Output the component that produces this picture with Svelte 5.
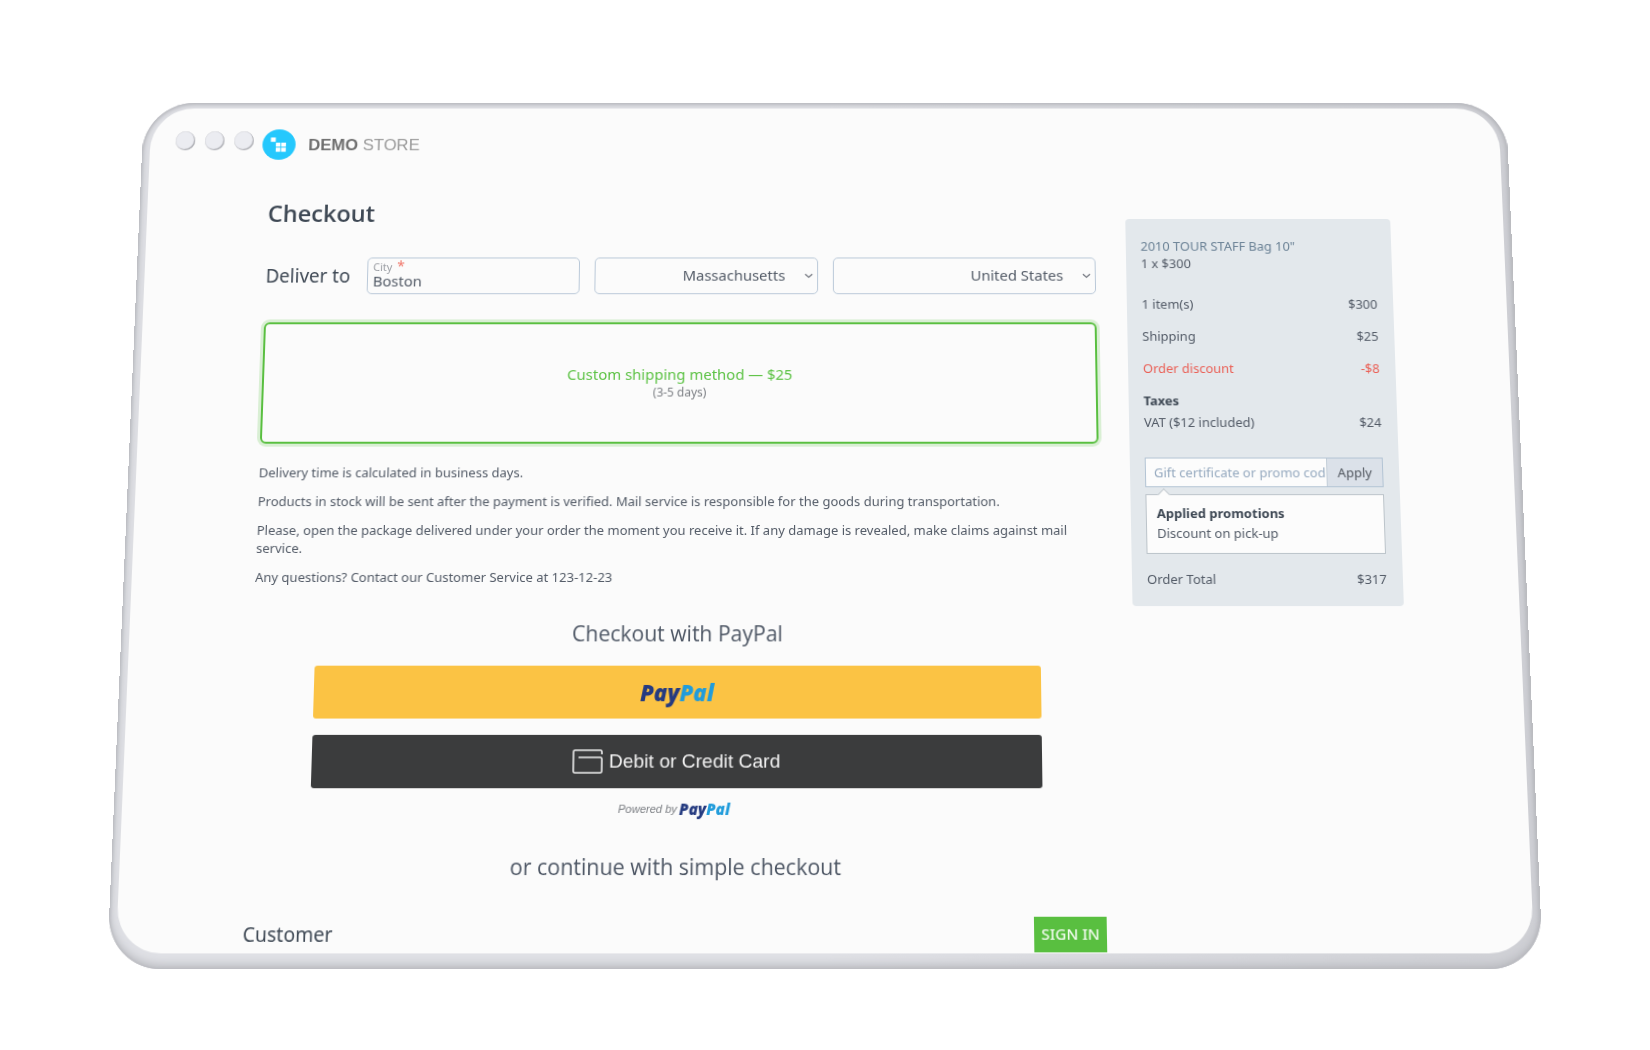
<script>
  let city = $state('Boston');
  let region = $state('Massachusetts');
  let country = $state('United States');
  let promo = $state('');

  const totals = [
    { label: '1 item(s)', value: '$300' },
    { label: 'Shipping', value: '$25' },
    { label: 'Order discount', value: '-$8', discount: true }
  ];

  const notes = [
    'Delivery time is calculated in business days.',
    'Products in stock will be sent after the payment is verified. Mail service is responsible for the goods during transportation.',
    'Please, open the package delivered under your order the moment you receive it. If any damage is revealed, make claims against mail service.',
    'Any questions? Contact our Customer Service at 123-12-23'
  ];
</script>

{#snippet chevron()}
  <svg class="chevron" viewBox="0 0 10 6" aria-hidden="true"><path d="M1 1l4 3.6L9 1" /></svg>
{/snippet}

{#snippet paypal()}
  <span class="paypal"><span class="pay">Pay</span><span class="pal">Pal</span></span>
{/snippet}

<div class="stage">
  <div class="frame">
    <div class="screen">
      <header>
        <div class="dots"><i></i><i></i><i></i></div>
        <a class="brand" href="#home">
          <svg class="mark" viewBox="0 0 34 32" aria-hidden="true">
            <ellipse cx="17" cy="16" rx="17" ry="16" fill="#25c8fd" />
            <g fill="#fff">
              <rect x="8.5" y="8.5" width="5" height="4.6" />
              <rect x="13.8" y="14" width="4.6" height="4.2" />
              <rect x="19.3" y="14" width="4.8" height="4.2" />
              <rect x="13.8" y="19.2" width="4.6" height="4.4" />
              <rect x="19.3" y="19.2" width="4.8" height="4.4" />
            </g>
          </svg>
          <span class="name"><b>DEMO</b> STORE</span>
        </a>
      </header>

      <div class="columns">
        <main>
          <h1>Checkout</h1>

          <div class="deliver">
            <h2>Deliver to</h2>
            <div class="field city">
              <label for="city">City <em>*</em></label>
              <input id="city" bind:value={city} />
            </div>
            <div class="field region">
              <select aria-label="State" bind:value={region}>
                <option>Massachusetts</option>
              </select>
              {@render chevron()}
            </div>
            <div class="field country">
              <select aria-label="Country" bind:value={country}>
                <option>United States</option>
              </select>
              {@render chevron()}
            </div>
          </div>

          <button class="method">
            <span class="title">Custom shipping method — $25</span>
            <span class="days">(3-5 days)</span>
          </button>

          <div class="notes">
            {#each notes as note}
              <p>{note}</p>
            {/each}
          </div>

          <section class="pay-options">
            <h3>Checkout with PayPal</h3>
            <button class="wide yellow">{@render paypal()}</button>
            <button class="wide dark">
              <svg class="card" viewBox="0 0 30 24" aria-hidden="true">
                <path d="M29 5V2.500a1.500 1.500 0 0 0-1.500-1.500H2.500a1.500 1.500 0 0 0-1.500 1.500v19a1.500 1.500 0 0 0 1.500 1.500h25a1.500 1.500 0 0 0 1.500-1.500V9.500a1.500 1.500 0 0 0-1.500-1.500H6" />
              </svg>
              Debit or Credit Card
            </button>
            <p class="powered"><span>Powered by</span>{@render paypal()}</p>
            <h3>or continue with simple checkout</h3>
          </section>

          <div class="customer">
            <h2>Customer</h2>
            <button class="signin">SIGN IN</button>
          </div>
        </main>

        <aside>
          <a class="product" href="#product">2010 TOUR STAFF Bag 10"</a>
          <div class="qty">1 x $300</div>
          <dl class="totals">
            {#each totals as row}
              <div class="row" class:discount={row.discount}>
                <dt>{row.label}</dt>
                <dd>{row.value}</dd>
              </div>
            {/each}
          </dl>
          <div class="taxes">Taxes</div>
          <div class="row"><span>VAT ($12 included)</span><span>$24</span></div>
          <form class="promo" onsubmit={(e) => e.preventDefault()}>
            <input aria-label="Gift certificate or promo code" placeholder="Gift certificate or promo code" bind:value={promo} />
            <button>Apply</button>
          </form>
          <div class="applied">
            <b>Applied promotions</b>
            <span>Discount on pick-up</span>
          </div>
          <div class="row total"><span>Order Total</span><span>$317</span></div>
        </aside>
      </div>
    </div>
  </div>
</div>

<style>
  :global(body) {
    margin: 0;
    background: #fff;
  }

  .stage {
    padding: 90px 126px;
    overflow: hidden;
    font-family: 'Noto Sans', 'Open Sans', sans-serif;
    font-size: 13px;
    line-height: 18px;
    color: #535b67;
  }

  .stage * {
    box-sizing: border-box;
  }

  .frame {
    padding: 6px 8px 15px;
    border-radius: 52px;
    background: linear-gradient(90deg, #dfe0e5, #dfe0e5 50%, #cfd0d5);
    box-shadow:
      inset 0 2px 4px #b9babf,
      inset 0 -4px 8px #b9babf,
      inset 1px 0 2px #c6c7cc,
      inset -2px 0 3px #bcbdc2;
    transform: perspective(1424px) rotateX(5deg);
  }

  .screen {
    border-radius: 44px;
    background: #fbfbfb;
    overflow: hidden;
    padding-bottom: 1px;
  }

  header {
    display: flex;
    align-items: center;
    gap: 9px;
    height: 76px;
    padding-left: 26px;
  }

  .dots {
    display: flex;
    gap: 10px;
    padding-bottom: 8px;
  }

  .dots i {
    width: 20px;
    height: 20px;
    border-radius: 50%;
    background: #ebecf1;
    box-shadow:
      inset -1px -1px 1px #a9aaaf,
      inset 0 0 1px #b5b6bb;
  }

  .brand {
    display: flex;
    align-items: center;
    gap: 13px;
    text-decoration: none;
    color: #9a9a9a;
    font-family: 'Liberation Sans', Arial, sans-serif;
    font-size: 17px;
  }

  .brand b {
    color: #6f6f6f;
  }

  .name {
    padding-top: 2px;
  }

  .mark {
    width: 34px;
    height: 32px;
  }

  .columns {
    display: grid;
    grid-template-columns: minmax(0, 1fr) 270px;
    align-items: start;
    gap: 31px;
    padding: 0 115px 0 123px;
  }

  h1,
  h2,
  h3,
  p,
  dl,
  dd {
    margin: 0;
  }

  button,
  input,
  select {
    font: inherit;
    color: inherit;
    margin: 0;
  }

  h1 {
    padding-top: 18px;
    font: 600 24px/32px 'Open Sans', sans-serif;
    color: #3e4854;
  }

  h2 {
    font: 400 19px/34px 'Noto Sans', sans-serif;
    color: #3e4854;
  }

  .deliver {
    display: grid;
    grid-template-columns: 88px 216fr 226fr 267fr;
    align-items: center;
    column-gap: 15px;
    padding-top: 30px;
    white-space: nowrap;
  }

  .field {
    position: relative;
    height: 38px;
    border: 1px solid #b9c8d8;
    border-radius: 5px;
    font-size: 15px;
    color: #535b67;
  }

  .city {
    display: flex;
    flex-direction: column;
    padding: 1px 5px;
  }

  .city label {
    font-size: 11px;
    line-height: 16px;
    height: 13px;
    color: #9a9da3;
  }

  .city em {
    color: #f0776a;
    font-style: normal;
    font-size: 14px;
    line-height: 12px;
    padding-left: 2px;
  }

  .city input {
    width: 100%;
    height: 18px;
    padding: 0;
    border: 0;
    outline: 0;
    background: none;
  }

  .field select {
    width: 100%;
    height: 100%;
    padding: 0 32px 2px 8px;
    border: 0;
    appearance: none;
    background: none;
    text-align: right;
    text-align-last: right;
  }

  .chevron {
    position: absolute;
    right: 4px;
    top: 15px;
    width: 9px;
    height: 6px;
    fill: none;
    stroke: #747880;
    stroke-width: 1.5;
  }

  .method {
    display: flex;
    flex-direction: column;
    align-items: center;
    justify-content: center;
    width: 100%;
    height: 124px;
    margin-top: 29px;
    border: 2px solid #59bf40;
    border-radius: 6px;
    background: none;
    box-shadow: 0 0 0 3px #d9efd4;
  }

  .method .title {
    font-size: 15px;
    line-height: 20px;
    color: #5cc244;
  }

  .method .days {
    font-size: 12px;
    color: #7c7f84;
  }

  .notes {
    display: grid;
    gap: 11px;
    padding-top: 20px;
  }

  .pay-options {
    display: flex;
    flex-direction: column;
    align-items: center;
    padding-top: 33px;
  }

  h3 {
    font: 400 21px/28px 'Open Sans', sans-serif;
    color: #4d5664;
  }

  .wide {
    display: flex;
    align-items: center;
    justify-content: center;
    gap: 6px;
    width: 720px;
    max-width: 100%;
    height: 52px;
    margin-top: 16px;
    border: 0;
    border-radius: 3px;
    font-family: 'Liberation Sans', Arial, sans-serif;
    font-size: 19px;
  }

  .yellow {
    margin-top: 18px;
    background: #fbc344;
  }

  .dark {
    background: #3b3c3d;
    color: #f2f2f2;
  }

  .card {
    width: 30px;
    height: 24px;
    fill: none;
    stroke: #eee;
    stroke-width: 1.6;
  }

  .paypal {
    font: italic 800 22px/24px 'Open Sans', sans-serif;
  }

  .pay {
    color: #253b80;
  }

  .pal {
    color: #219cdb;
  }

  .powered {
    display: flex;
    align-items: center;
    gap: 2px;
    padding: 11px 4px 33px 0;
    font: italic 11px/18px 'Liberation Sans', Arial, sans-serif;
    color: #7c7f84;
  }

  .powered .paypal {
    font-size: 15px;
    line-height: 18px;
  }

  .customer {
    display: flex;
    align-items: center;
    justify-content: space-between;
    padding-top: 34px;
  }

  .signin {
    width: 71px;
    height: 34px;
    padding: 0 0 2px;
    border: 0;
    background: #59bf40;
    color: #f1fbee;
    font: 500 15px/20px 'Noto Sans', sans-serif;
  }

  aside {
    margin-top: 40px;
    padding: 19px 16px 18px 15px;
    border-radius: 4px;
    background: #e3e8ec;
  }

  .product {
    display: block;
    text-decoration: none;
    color: #6a8195;
  }

  .totals {
    padding-top: 24px;
  }

  .row {
    display: flex;
    justify-content: space-between;
  }

  .totals .row {
    padding-bottom: 15px;
  }

  .discount {
    color: #ea5f55;
  }

  .taxes {
    font-weight: 700;
    padding-bottom: 4px;
    color: #3e4854;
  }

  .promo {
    display: flex;
    height: 30px;
    margin-top: 27px;
    border: 1px solid #b3c4d4;
    background: #fcfcfc;
  }

  .promo input {
    flex: 1;
    min-width: 0;
    padding: 0 0 0 8px;
    border: 0;
    outline: 0;
    background: none;
  }

  .promo input::placeholder {
    color: #95a9bf;
    opacity: 1;
  }

  .promo button {
    width: 56px;
    padding: 0;
    border: 0;
    border-left: 1px solid #c3ced8;
    background: #dbe1e9;
    color: #4f555d;
  }

  .applied {
    position: relative;
    display: flex;
    flex-direction: column;
    gap: 2px;
    margin-top: 7px;
    padding: 9px 10px 11px;
    border: 1px solid #bcc4ca;
    background: #fcfcfc;
  }

  .applied::before {
    content: '';
    position: absolute;
    left: 13px;
    top: -5px;
    width: 8px;
    height: 8px;
    background: #fcfcfc;
    border: solid #bcc4ca;
    border-width: 1px 0 0 1px;
    rotate: 45deg;
  }

  .applied b {
    color: #3e4854;
  }

  .total {
    padding-top: 16px;
  }
</style>
